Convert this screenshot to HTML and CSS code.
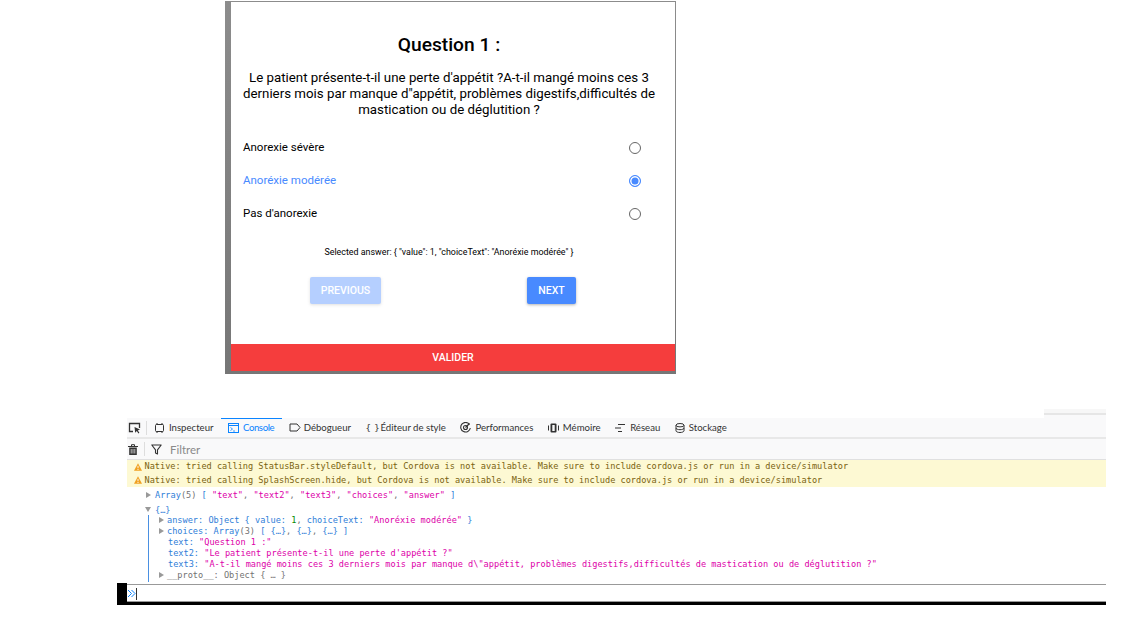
FILE: index.html
```html
<!DOCTYPE html>
<html lang="fr">
<head>
<meta charset="utf-8">
<title>Question</title>
<link rel="stylesheet" href="styles.css">
</head>
<body>
<section class="phone">
  <div class="app">
    <div class="content">
      <h1 class="title">Question 1 :</h1>
      <p class="question">Le patient présente-t-il une perte d'appétit ?A-t-il mangé moins ces 3 derniers mois par manque d"appétit, problèmes digestifs,difficultés de mastication ou de déglutition ?</p>
      <div class="choices">
        <div class="choice"><span>Anorexie sévère</span><i class="radio"></i></div>
        <div class="choice selected"><span>Anoréxie modérée</span><i class="radio"></i></div>
        <div class="choice"><span>Pas d'anorexie</span><i class="radio"></i></div>
      </div>
      <p class="selected-answer">Selected answer: { "value": 1, "choiceText": "Anoréxie modérée" }</p>
      <div class="nav">
        <button class="btn disabled">PREVIOUS</button>
        <button class="btn">NEXT</button>
      </div>
    </div>
    <button class="validate">VALIDER</button>
  </div>
</section>

<section class="devtools">
  <div class="tabs-cap"></div>
  <nav class="tabs">
    <span class="picker"><svg width="13" height="12" viewBox="0 0 13 12"><path d="M11.5 6V1.5h-10v8H5" fill="none" stroke="#333" stroke-width="1.3"/><path d="M6.5 5l5.5 2.5-2.2.9 1.6 2.3-1 .7-1.6-2.3-1.6 1.6z" fill="#333"/></svg></span>
    <span class="tab"><svg width="15" height="10" viewBox="0 0 15 10"><rect x="1.500" y="1.500" width="8" height="7" rx="1" fill="none" stroke="#333"/><path d="M3 0v2M8 0v2M3 8v2M8 8v2" stroke="#333"/></svg>Inspecteur</span>
    <span class="tab active"><svg width="15" height="10" viewBox="0 0 15 10"><rect x=".5" y=".5" width="10" height="9" fill="none" stroke="#0a84ff"/><path d="M.5 2.500h10" stroke="#0a84ff"/><path d="M2.500 4.500l2 1.500-2 1.500M5 8h2" fill="none" stroke="#0a84ff" stroke-width=".8"/></svg>Console</span>
    <span class="tab"><svg width="15" height="9" viewBox="0 0 15 9"><path d="M1 1h7l3 3.500-3 3.500H1z" fill="none" stroke="#333" stroke-linejoin="round"/></svg>Débogueur</span>
    <span class="tab"><span class="braces">{ }</span>Éditeur de style</span>
    <span class="tab"><svg width="15" height="11" viewBox="0 0 15 11"><path d="M9.500 2.500A4.800 4.800 0 1 0 10.300 6" fill="none" stroke="#333" stroke-width="1.100"/><circle cx="5.500" cy="5.500" r="2" fill="none" stroke="#333" stroke-width="1.100"/><path d="M5.500 5.500L9.500 1.500" stroke="#333" stroke-width="1.200"/></svg>Performances</span>
    <span class="tab"><svg width="15" height="10" viewBox="0 0 15 10"><rect x="2.500" y=".5" width="6" height="9" rx="1" fill="#333"/><path d="M.5 2.500v5M10.500 2.500v5" stroke="#333"/><rect x="4.300" y="2" width="2.400" height="6" fill="#f9f9fa"/></svg>Mémoire</span>
    <span class="tab"><svg width="15" height="10" viewBox="0 0 15 10"><path d="M3 1.500h7M0 5h6M3 8.500h4" stroke="#333" stroke-width="1.200"/></svg>Réseau</span>
    <span class="tab"><svg width="14" height="10" viewBox="0 0 14 10"><ellipse cx="5" cy="2.200" rx="4" ry="1.700" fill="none" stroke="#333"/><path d="M1 2.200v5.600c0 .9 1.800 1.700 4 1.700s4-.8 4-1.700V2.200M1 5c0 .9 1.800 1.700 4 1.700S9 5.900 9 5" fill="none" stroke="#333"/></svg>Stockage</span>
  </nav>
  <div class="filterbar">
    <svg class="trash" width="10" height="11" viewBox="0 0 10 11"><path d="M0 2.500h10M3.500 2V.7h3V2" fill="none" stroke="#333"/><path d="M1.200 3.500h7.600V11H1.200z" fill="#333"/><path d="M3.200 5v4.500M5 5v4.500M6.800 5v4.500" stroke="#f9f9fa" stroke-width=".7"/></svg>
    <i class="sep"></i>
    <svg class="funnel" width="11" height="11" viewBox="0 0 11 11"><path d="M.8 1h9.400L6.500 5.800V10L4.500 9V5.800z" fill="none" stroke="#333" stroke-width="1.100" stroke-linejoin="round"/></svg>
    <span class="filter-label">Filtrer</span>
  </div>
  <div class="output">
    <div class="warn"><svg width="8" height="8" viewBox="0 0 8 8"><path d="M4 .3L8 7.700H0z" fill="#f0a020"/><path d="M4 2.800v2.500M4 6v1" stroke="#fff" stroke-width=".9"/></svg>Native: tried calling StatusBar.styleDefault, but Cordova is not available. Make sure to include cordova.js or run in a device/simulator</div>
    <div class="warn"><svg width="8" height="8" viewBox="0 0 8 8"><path d="M4 .3L8 7.700H0z" fill="#f0a020"/><path d="M4 2.800v2.500M4 6v1" stroke="#fff" stroke-width=".9"/></svg>Native: tried calling SplashScreen.hide, but Cordova is not available. Make sure to include cordova.js or run in a device/simulator</div>
    <div class="log array"><i class="arrow"></i><b class="k">Array</b><b class="g">(5)</b> <b class="k">[</b> <b class="s">"text"</b><b class="g">,</b> <b class="s">"text2"</b><b class="g">,</b> <b class="s">"text3"</b><b class="g">,</b> <b class="s">"choices"</b><b class="g">,</b> <b class="s">"answer"</b> <b class="k">]</b></div>
    <div class="log object"><i class="arrow open"></i><b class="k">{…}</b></div>
    <div class="tree">
      <div class="log"><i class="arrow"></i><b class="k">answer:</b> <b class="k">Object { value:</b> <b class="n">1</b><b class="g">,</b> <b class="k">choiceText:</b> <b class="s">"Anoréxie modérée"</b> <b class="k">}</b></div>
      <div class="log"><i class="arrow"></i><b class="k">choices:</b> <b class="k">Array</b><b class="g">(3)</b> <b class="k">[ {…}</b><b class="g">,</b> <b class="k">{…}</b><b class="g">,</b> <b class="k">{…} ]</b></div>
      <div class="log leaf"><b class="k">text:</b> <b class="s">"Question 1 :"</b></div>
      <div class="log leaf"><b class="k">text2:</b> <b class="s">"Le patient présente-t-il une perte d'appétit ?"</b></div>
      <div class="log leaf"><b class="k">text3:</b> <b class="s">"A-t-il mangé moins ces 3 derniers mois par manque d\"appétit, problèmes digestifs,difficultés de mastication ou de déglutition ?"</b></div>
      <div class="log"><i class="arrow"></i><b class="g">__proto__: Object { … }</b></div>
    </div>
  </div>
  <div class="input"><span class="corner"></span><svg class="prompt" width="9" height="9" viewBox="0 0 9 9"><path d="M1 1l3.500 3.500L1 8M4.500 1L8 4.500 4.500 8" fill="none" stroke="#0a84ff"/></svg><span class="caret"></span></div>
</section>
</body>
</html>
```
FILE: styles.css
```css
* { box-sizing: border-box; }
html, body { margin: 0; padding: 0; background: #fff; }
body { width: 1124px; height: 620px; overflow: hidden; font-family: Roboto, sans-serif; }

.phone { width: 451px; height: 373px; margin: 1px 0 0 225px; padding: 1px 1px 3px 6px; background: linear-gradient(#8c8c8c, #767676); }
.app { height: 369px; background: #fff; display: flex; flex-direction: column; }
.content { flex: 1; padding: 31px 20px 0 12px; text-align: center; display: flex; flex-direction: column; }
.title { margin: 0; font-size: 19.200px; line-height: 24px; font-weight: 500; color: #000; }
.question { margin: 13px -6px 0; font-size: 13.300px; line-height: 16px; color: #000; }
.choices { margin-top: 13px; }
.choice { height: 33.300px; display: flex; align-items: center; justify-content: space-between; font-size: 11.520px; line-height: 13px; color: #000; padding-right: 14px; }
.choice span { margin-top: -1px; }
.choice.selected { color: #488aff; }
.radio { width: 12px; height: 12px; border-radius: 50%; border: 1.600px solid #666; background: #fff; }
.selected .radio { border-color: #488aff; background: #488aff; box-shadow: inset 0 0 0 1.500px #fff; }
.selected-answer { margin: 15px 0 0; font-size: 8.900px; line-height: 12px; color: #000; }
.nav { margin-top: 19px; display: flex; padding-left: 67px; }
.btn { height: 27px; border: 0; border-radius: 2px; background: #488aff; color: #fff; font: 500 10.500px Roboto, sans-serif; width: 49px; margin-left: 146px; box-shadow: 0 1px 3px rgba(0,0,0,.3); padding: 0; }
.btn.disabled { width: 71px; margin-left: 0; opacity: .4; }
.validate { height: 27px; flex: none; border: 0; background: #f53d3d; color: #fff; font: 500 10.500px Roboto, sans-serif; padding: 0; }

.devtools { width: 989px; margin: 44px 0 0 117px; font-family: Lato, sans-serif; color: #333; position: relative; }
.tabs-cap { position: absolute; left: 927px; top: -9px; width: 62px; height: 9px; background: #f9f9fa; border-top: 4px solid #f7f7f7; box-shadow: inset 0 2px 0 #e6e6e6; }
.tabs { margin-left: 10px; height: 21px; background: #f9f9fa; border-bottom: 2px solid #e8e8e8; display: flex; align-items: center; font-size: 9.600px; }
.picker { width: 20px; padding-left: 1px; display: flex; border-right: 1px solid #ddd; height: 14px; align-items: center; }
.tab { display: flex; align-items: center; height: 19px; padding: 0 7.500px 0 7px; white-space: nowrap; }
.tab svg, .braces { flex: none; }
.braces { width: 15px; font-family: "DejaVu Sans Mono", monospace; font-size: 9px; letter-spacing: -1px; }
.tab.active { color: #0a84ff; box-shadow: inset 0 1px 0 #0a84ff; letter-spacing: -.4px; }
.filterbar { margin-left: 10px; height: 21px; background: #f9f9fa; border-bottom: 1px solid #e0e0e0; display: flex; align-items: center; padding-left: 1px; }
.sep { width: 1px; height: 14px; background: #ddd; margin-left: 6px; }
.funnel { margin-left: 6px; }
.filter-label { margin-left: 8px; font-size: 11.500px; color: #8a8a8a; }
.output { margin-left: 10px; font: 8.600px/11px "DejaVu Sans Mono", monospace; height: 124px; background: #fff; }
.output b { font-weight: 400; }
.warn { height: 13.500px; background: #fdf9d3; color: #7a6210; display: flex; align-items: center; gap: 2.500px; padding-left: 7px; white-space: pre; }
.log { white-space: pre; height: 11px; }
.array { padding-left: 19px; margin-top: 3px; }
.object { margin-top: 4px; padding-left: 18px; }
.arrow { display: inline-block; vertical-align: 0; width: 0; height: 0; border-left: 5px solid #999; border-top: 3px solid transparent; border-bottom: 3px solid transparent; margin-right: 4px; }
.arrow.open { border-top: 5px solid #999; border-left: 3px solid transparent; border-right: 3px solid transparent; border-bottom: 0; margin: 0 4px 1px 0; }
.tree { margin: -1px 0 0 21px; padding-left: 10px; border-left: 1px solid #4a90e2; height: 67px; }
.tree .log { height: 11px; }
.tree .arrow { margin-right: 3px; }
.leaf { padding-left: 9px; }
.k { color: #2f7ed8; }
.s { color: #dd00a9; }
.g { color: #737373; }
.n { color: #058b00; }
.input { height: 21px; border-top: 1px solid #999; border-bottom: 3px solid #000; box-shadow: inset 0 -1px 0 #999; display: flex; align-items: center; }
.corner { width: 10px; height: 21px; background: #000; flex: none; margin-top: -1px; }
.caret { width: 1px; height: 12px; background: #333; }
```
